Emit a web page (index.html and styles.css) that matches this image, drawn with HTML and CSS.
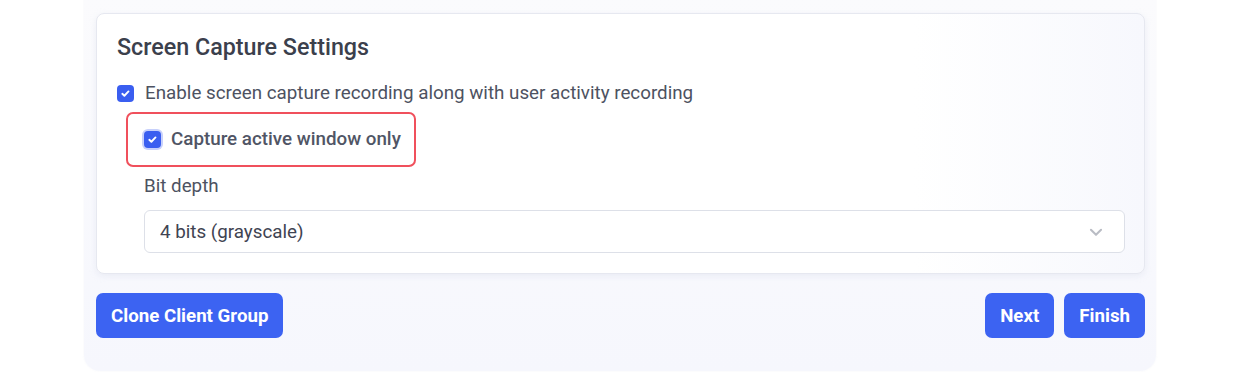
FILE: index.html
```html
<!DOCTYPE html>
<html>
<head>
<meta charset="utf-8">
<link rel="stylesheet" href="styles.css">
</head>
<body>
<div class="panel">
  <div class="card">
    <h2 class="title">Screen Capture Settings</h2>
    <label class="check-row">
      <span class="box"><svg viewBox="0 0 16 16" width="16" height="16"><path d="M4.6 8.3l2.2 2.1 4.4-4.6" fill="none" stroke="#fff" stroke-width="2" stroke-linecap="round" stroke-linejoin="round"/></svg></span>
      <span>Enable screen capture recording along with user activity recording</span>
    </label>
    <div class="sub">
      <label class="check-row highlight">
        <span class="box focus"><svg viewBox="0 0 16 16" width="16" height="16"><path d="M4.6 8.3l2.2 2.1 4.4-4.6" fill="none" stroke="#fff" stroke-width="2" stroke-linecap="round" stroke-linejoin="round"/></svg></span>
        <span>Capture active window only</span>
      </label>
      <div class="field-label">Bit depth</div>
      <div class="select">
        <span>4 bits (grayscale)</span>
        <svg class="chev" viewBox="0 0 16 16" width="16" height="16"><path d="M3.5 6l4.5 4.5L12.5 6" fill="none" stroke="#b9bcc4" stroke-width="1.8" stroke-linecap="round" stroke-linejoin="round"/></svg>
      </div>
    </div>
  </div>
  <div class="actions">
    <button class="btn">Clone Client Group</button>
    <div class="right">
      <button class="btn">Next</button>
      <button class="btn">Finish</button>
    </div>
  </div>
</div>
</body>
</html>
```
FILE: styles.css
```css
html, body {
  margin: 0;
  padding: 0;
  background: #ffffff;
  font-family: Roboto, "Liberation Sans", sans-serif;
}
body {
  width: 1238px;
  height: 372px;
  overflow: hidden;
}
.panel {
  margin-left: 84px;
  width: 1072px;
  box-sizing: border-box;
  margin-top: -4px;
  padding: 17px 11px 33px 12px;
  border-radius: 0 0 16px 16px;
  background: linear-gradient(180deg, #fbfbfd 0%, #f6f7fd 100%);
  box-shadow: 0 0 2px rgba(200, 205, 225, 0.2);
}
.card {
  background: linear-gradient(90deg, #ffffff 0%, #ffffff 78%, #f7f8fd 100%);
  border: 1px solid #e6e8f0;
  border-radius: 8px;
  padding: 19px 19px 20px 20px;
  box-shadow: 0 2px 6px rgba(210, 214, 230, 0.35);
}
.title {
  margin: 0 0 22px 0;
  font-size: 23.3px;
  font-weight: 500;
  color: #3b404c;
  line-height: 28px;
}
.check-row {
  display: flex;
  align-items: center;
  gap: 11px;
  font-size: 18.8px;
  color: #4d5261;
  line-height: 20px;
}
.box {
  width: 17px;
  height: 17px;
  border-radius: 4px;
  background: #3a5ef0;
  display: flex;
  align-items: center;
  justify-content: center;
  flex: none;
}
.box svg { width: 15px; height: 15px; }
.box.focus {
  box-shadow: 0 0 0 2px #c7d0fb;
}
.sub {
  padding-left: 27px;
  margin-top: 9px;
}
.highlight {
  display: inline-flex;
  margin-left: -18px;
  padding: 15px 13px 16px 16px;
  border: 2px solid #f0505c;
  border-radius: 7px;
  font-weight: 500;
  color: #505565;
  gap: 10px;
}
.field-label {
  font-size: 18.8px;
  color: #4d5261;
  margin-top: 9px;
  line-height: 20px;
}
.select {
  margin-top: 14px;
  height: 43px;
  box-sizing: border-box;
  border: 1px solid #dde0e8;
  border-radius: 6px;
  display: flex;
  align-items: center;
  justify-content: space-between;
  padding: 0 19px 0 15px;
  font-size: 18.8px;
  color: #3f4452;
  background: #fff;
}
.chev { width: 18px; height: 18px; }
.actions {
  display: flex;
  justify-content: space-between;
  margin-top: 19px;
}
.right {
  display: flex;
  gap: 10px;
}
.btn {
  height: 45px;
  border: none;
  border-radius: 7px;
  background: #3c63f2;
  color: #fff;
  font-family: Roboto, "Liberation Sans", sans-serif;
  font-size: 18.7px;
  font-weight: 700;
  padding: 0 15px;
  cursor: pointer;
}
```
